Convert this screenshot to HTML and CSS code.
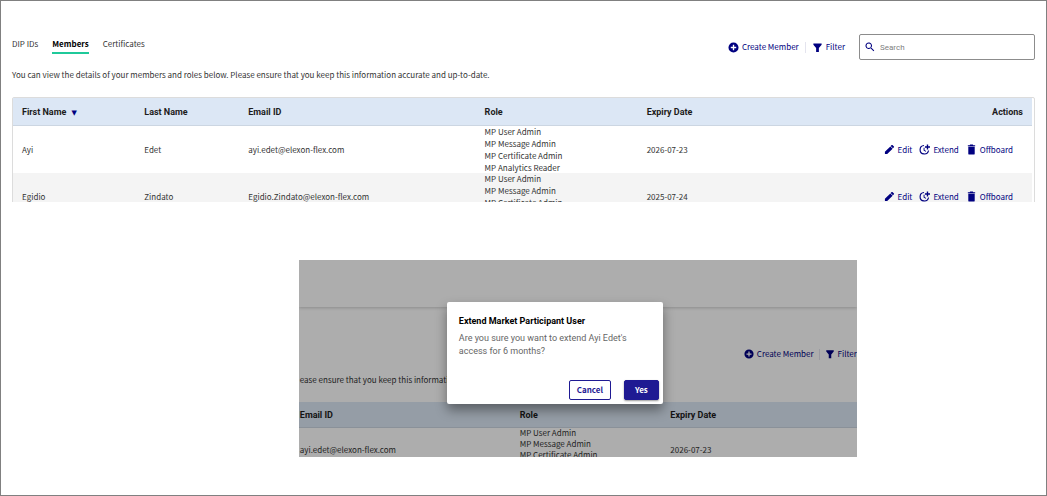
FILE: index.html
```
<!DOCTYPE html>
<html lang="en">
<head>
    <meta charset="UTF-8">
    <meta name="viewport" content="width=device-width, initial-scale=1.0">
    <title>Members</title>
    <link rel="stylesheet" href="styles.css">
</head>
<body>
    <!-- shared icons -->
    <svg class="sprite" aria-hidden="true">
        <symbol id="icon-add" viewBox="0 0 24 24"><path d="M12 1a11 11 0 1 0 0 22 11 11 0 0 0 0-22zm6 12.500h-4.500V18h-3v-4.500H6v-3h4.500V6h3v4.500H18z"/></symbol>
        <symbol id="icon-filter" viewBox="0 0 24 24"><path d="M3 3h18v3l-6 7v9H9v-9L3 6z"/></symbol>
        <symbol id="icon-search" viewBox="0 0 24 24"><path d="M15.500 14h-.8l-.3-.3A6.500 6.500 0 1 0 13.700 14.400l.3.3v.8l5 5 1.500-1.500zm-6 0a4.500 4.500 0 1 1 0-9 4.500 4.500 0 0 1 0 9z"/></symbol>
        <symbol id="icon-edit" viewBox="0 0 24 24"><path d="M2 17v5h5L18.800 10.200l-5-5zM21.700 7.300c.5-.5.5-1.200 0-1.700l-3.300-3.300c-.5-.5-1.200-.5-1.700 0L14.500 4.500 19.500 9.500z"/></symbol>
        <symbol id="icon-extend" viewBox="0 0 24 24"><path d="M17 1v4h-4v3h4v4h3V8h4V5h-4V1zM10 8v6l4.500 2.700 1.100-1.700-3.500-2.100V8zM19.500 14A8 8 0 1 1 11 4.500V2A10.500 10.500 0 1 0 22 14z"/></symbol>
        <symbol id="icon-delete" viewBox="0 0 24 24"><path d="M5 21c0 1.200 1 2 2 2h10c1.100 0 2-.8 2-2V6H5zM20 2.500h-4L15 1H9L8 2.500H4V5h16z"/></symbol>
    </svg>

    <main class="page">
        <section class="members">
            <div class="topbar">
                <nav class="tabs">
                    <a href="#">DIP IDs</a>
                    <a href="#" class="active">Members</a>
                    <a href="#">Certificates</a>
                </nav>
                <div class="tools">
                    <button class="link-button"><svg class="icon"><use href="#icon-add"/></svg>Create Member</button>
                    <span class="divider"></span>
                    <button class="link-button"><svg class="icon"><use href="#icon-filter"/></svg>Filter</button>
                    <label class="search">
                        <svg class="icon"><use href="#icon-search"/></svg>
                        <input type="search" placeholder="Search" aria-label="Search">
                    </label>
                </div>
            </div>
            <p class="intro">You can view the details of your members and roles below. Please ensure that you keep this information accurate and up-to-date.</p>

            <div class="table-wrap">
                <table class="members-table">
                    <thead>
                        <tr>
                            <th class="col-first">First Name <span class="sort">▼</span></th>
                            <th class="col-last">Last Name</th>
                            <th class="col-email">Email ID</th>
                            <th class="col-role">Role</th>
                            <th>Expiry Date</th>
                            <th class="col-actions">Actions</th>
                        </tr>
                    </thead>
                    <tbody>
                        <tr>
                            <td>Ayi</td>
                            <td>Edet</td>
                            <td>ayi.edet@elexon-flex.com</td>
                            <td>
                                <ul class="roles">
                                    <li>MP User Admin</li>
                                    <li>MP Message Admin</li>
                                    <li>MP Certificate Admin</li>
                                    <li>MP Analytics Reader</li>
                                </ul>
                            </td>
                            <td>2026-07-23</td>
                            <td>
                                <div class="actions">
                                    <button class="link-button"><svg class="icon"><use href="#icon-edit"/></svg>Edit</button>
                                    <button class="link-button"><svg class="icon"><use href="#icon-extend"/></svg>Extend</button>
                                    <button class="link-button"><svg class="icon"><use href="#icon-delete"/></svg>Offboard</button>
                                </div>
                            </td>
                        </tr>
                        <tr>
                            <td>Egidio</td>
                            <td>Zindato</td>
                            <td>Egidio.Zindato@elexon-flex.com</td>
                            <td>
                                <ul class="roles">
                                    <li>MP User Admin</li>
                                    <li>MP Message Admin</li>
                                    <li>MP Certificate Admin</li>
                                    <li>MP Analytics Reader</li>
                                </ul>
                            </td>
                            <td>2025-07-24</td>
                            <td>
                                <div class="actions">
                                    <button class="link-button"><svg class="icon"><use href="#icon-edit"/></svg>Edit</button>
                                    <button class="link-button"><svg class="icon"><use href="#icon-extend"/></svg>Extend</button>
                                    <button class="link-button"><svg class="icon"><use href="#icon-delete"/></svg>Offboard</button>
                                </div>
                            </td>
                        </tr>
                    </tbody>
                </table>
            </div>
        </section>

        <section class="preview">
            <div class="preview-header"></div>
            <div class="tools preview-tools">
                <button class="link-button"><svg class="icon"><use href="#icon-add"/></svg>Create Member</button>
                <span class="divider"></span>
                <button class="link-button"><svg class="icon"><use href="#icon-filter"/></svg>Filter</button>
            </div>
            <p class="intro">ease ensure that you keep this information accurate</p>
            <table class="members-table">
                <thead>
                    <tr>
                        <th class="col-email">Email ID</th>
                        <th class="col-role">Role</th>
                        <th>Expiry Date</th>
                    </tr>
                </thead>
                <tbody>
                    <tr>
                        <td>ayi.edet@elexon-flex.com</td>
                        <td>
                            <ul class="roles">
                                <li>MP User Admin</li>
                                <li>MP Message Admin</li>
                                <li>MP Certificate Admin</li>
                                <li>MP Analytics Reader</li>
                            </ul>
                        </td>
                        <td>2026-07-23</td>
                    </tr>
                </tbody>
            </table>

            <div class="backdrop"></div>
            <div class="dialog" role="dialog" aria-labelledby="dialog-title">
                <h2 id="dialog-title">Extend Market Participant User</h2>
                <p>Are you sure you want to extend Ayi Edet's access for 6 months?</p>
                <div class="dialog-buttons">
                    <button class="btn">Cancel</button>
                    <button class="btn btn-primary">Yes</button>
                </div>
            </div>
        </section>
    </main>
</body>
</html>
```
FILE: styles.css
```
* {
    box-sizing: border-box;
}

body {
    margin: 0;
    background: #fff;
    color: #333;
    font-family: "Noto Sans CJK SC", sans-serif;
    font-size: 8px;
    line-height: 14px;
}

.sprite {
    display: none;
}

.page {
    min-height: 100vh;
    border: 1px solid #808080;
}

button {
    font: inherit;
    cursor: pointer;
}

.icon {
    width: 11px;
    height: 11px;
    flex: none;
    fill: #000080;
}

/* Members list */
.members {
    height: 201px;
    padding: 33px 11px 0;
    overflow: hidden;
}

.topbar {
    display: flex;
    justify-content: space-between;
}

.tabs {
    display: flex;
    align-items: flex-start;
    gap: 14px;
    padding-top: 3px;
}

.tabs a {
    padding-bottom: 1px;
    border-bottom: 2px solid transparent;
    color: #333;
    text-decoration: none;
}

.tabs .active {
    border-color: #1fc99a;
    color: #000;
    font-weight: bold;
}

.tools {
    display: flex;
    align-items: center;
}

.divider {
    width: 1px;
    height: 11px;
    margin: 0 6px;
    background: #e4e4ee;
}

.link-button {
    display: inline-flex;
    align-items: center;
    gap: 3px;
    padding: 0;
    border: none;
    background: none;
    color: #000080;
    white-space: nowrap;
}

.search {
    display: flex;
    align-items: center;
    gap: 4px;
    width: 176px;
    height: 26px;
    margin-left: 14px;
    padding: 0 4px;
    border: 1px solid #8c8c8c;
    border-radius: 2px;
}

.search .icon {
    width: 12px;
    height: 12px;
}

.search input {
    width: 100%;
    padding: 0;
    border: none;
    outline: none;
    background: none;
    font: 8px Roboto, sans-serif;
}

.search input::placeholder {
    color: #808080;
}

.intro {
    margin: 8px 0 15px;
}

.table-wrap {
    padding-right: 2px;
    border: 1px solid #dcdcdc;
    border-radius: 2px;
}

.members-table {
    width: 100%;
    border-collapse: collapse;
    table-layout: fixed;
}

.members-table th {
    height: 28px;
    padding: 0 9px;
    background: #dce7f5;
    box-shadow: inset 0 -1px #ccd6e2;
    color: #1c1c1c;
    font-family: Roboto, sans-serif;
    font-size: 9px;
    font-weight: bold;
    text-align: left;
    white-space: nowrap;
}

.members-table td {
    padding: 0 9px;
    white-space: nowrap;
}

.members-table tbody tr:nth-child(even) {
    background: #f4f4f4;
}

.col-first {
    width: 12%;
}

.col-last {
    width: 10.2%;
}

.col-email {
    width: 23.2%;
}

.col-role {
    width: 15.9%;
}

.members-table .col-actions {
    text-align: right;
}

.sort {
    margin-left: 3px;
    color: #000080;
    font-family: "DejaVu Sans", sans-serif;
    font-size: 7px;
}

.roles {
    display: flex;
    flex-direction: column;
    gap: 1px;
    margin: 0;
    padding: 0;
    line-height: 11px;
    list-style: none;
}

.actions {
    display: flex;
    justify-content: flex-end;
    gap: 7px;
    padding-right: 10px;
}

/* Extend confirmation */
.preview {
    position: relative;
    height: 197px;
    margin: 58px 18.1% 0 28.5%;
    overflow: hidden;
}

.preview-header {
    height: 47px;
    box-shadow: 0 1px 3px rgba(0, 0, 0, 0.2);
}

.preview-tools {
    justify-content: flex-end;
    padding-top: 40px;
}

.preview .icon {
    width: 10px;
    height: 10px;
}

.preview .divider {
    margin: 0 5px;
}

.preview .intro {
    margin: 12px 1px 15px;
}

.preview .members-table th {
    height: 26px;
}

.preview .members-table th,
.preview .members-table td {
    padding: 0 1px;
}

.preview .roles {
    line-height: 10px;
}

.preview .col-email {
    width: 39.4%;
}

.preview .col-role {
    width: 27%;
}

.backdrop {
    position: absolute;
    inset: 0;
    background: rgba(0, 0, 0, 0.32);
}

.dialog {
    position: absolute;
    top: 42px;
    left: 148px;
    width: 216px;
    padding: 12px 4px 4px 12px;
    border-radius: 2px;
    background: #fff;
    box-shadow: 0 6px 12px rgba(0, 0, 0, 0.4);
    font-family: Roboto, sans-serif;
}

.dialog h2 {
    margin: 0 0 4px;
    color: #000;
    font-size: 9px;
    font-weight: bold;
    line-height: 14px;
}

.dialog p {
    margin: 0 24px 22px 0;
    color: #666;
    font-size: 9px;
    line-height: 13px;
}

.dialog-buttons {
    display: flex;
    justify-content: flex-end;
    gap: 13px;
}

.btn {
    height: 20px;
    padding: 0 7px;
    border: 1px solid #1f1a93;
    border-radius: 2px;
    background: #fff;
    color: #1f1a93;
    font-family: "Noto Sans CJK SC", sans-serif;
    font-weight: bold;
}

.btn-primary {
    padding: 0 10px;
    background: #1f1a93;
    color: #fff;
    box-shadow: 0 1px 2px rgba(0, 0, 0, 0.4);
}
```
